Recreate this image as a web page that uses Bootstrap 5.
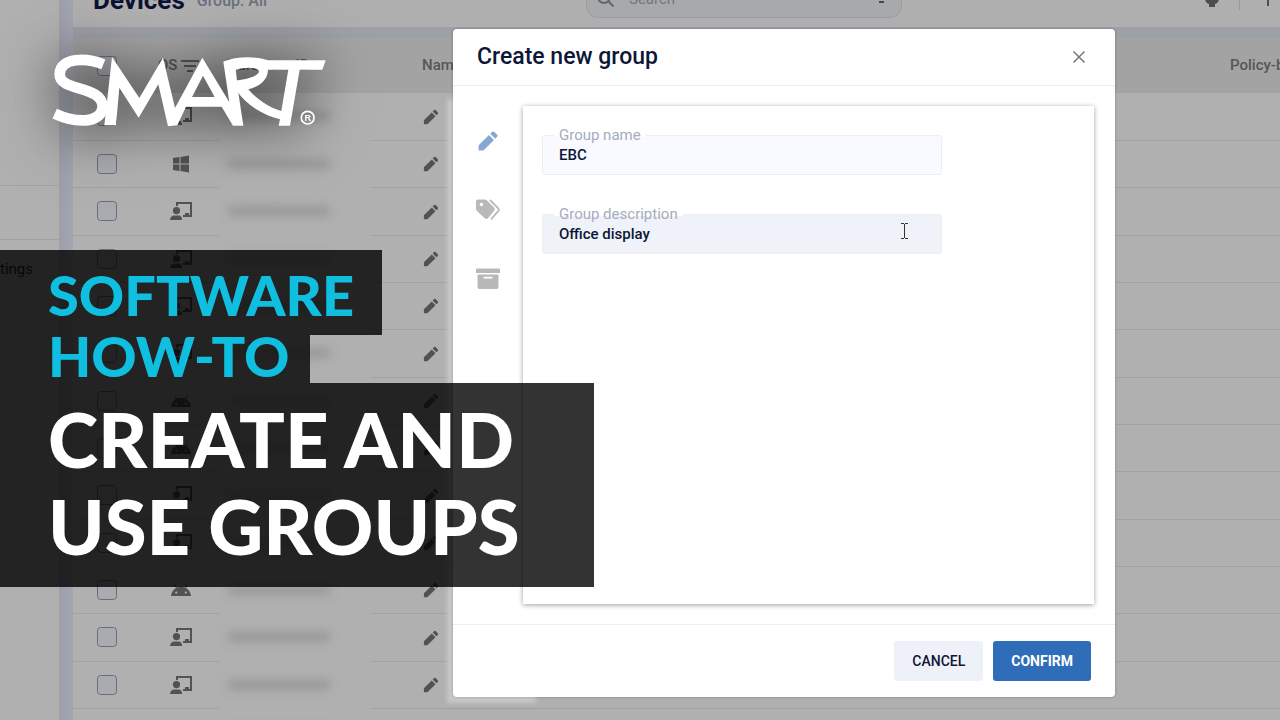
<!DOCTYPE html>
<html lang="en">
<head>
<meta charset="utf-8">
<meta name="viewport" content="width=device-width, initial-scale=1">
<title>Create new group</title>
<link href="https://cdn.jsdelivr.net/npm/bootstrap@5.3.0/dist/css/bootstrap.min.css" rel="stylesheet">
<style>
  body { font-family: Roboto, "Liberation Sans", sans-serif; background: #b0b0b0; color: #55565a; font-size: 15px; }
  .app-shell { min-height: 100vh; }
  .side-menu { width: 59px; border-right: 0; overflow: hidden; color: #15171f; }
  .side-block { border-bottom: 1px solid #a0a1a5; }
  .side-top { height: 186px; }
  .side-mid { height: 54px; }
  .side-link { color: #26272c; height: 58px; direction: rtl; width: 33px; text-decoration: none; }
  .side-gap { width: 14px; background: linear-gradient(90deg, #9c9faa, #a3a6b0); }
  .page-main { min-width: 0; }
  .top-bar { height: 27px; padding: 0 0 0 20px; overflow: hidden; background: #afafaf; }
  .top-bar h1 { font-size: 26px; line-height: 24px; height: 12px; margin-top: -12px; color: #0d1233; font-weight: 700; }
  .top-sub { font-size: 16px; line-height: 20px; margin-top: -9px; color: #6c6f7e; font-weight: 500; }
  .search-box { width: 316px; height: 38px; margin-top: -20px; background: #a8a9ac; border: 1px solid #9c9da2; border-radius: 12px; }
  .search-box input { font-size: 15px; color: #74767e; background: none; border: 0; padding: 0; width: 220px; }
  .search-box input::placeholder { color: #74767e; }
  .band { height: 11px; background: #9d9fa9; }
  .device-table { --bs-table-bg: transparent; --bs-table-color: #55565a; table-layout: fixed; width: 100%; border-color: #a0a1a6; }
  .device-table th { height: 55px; padding: 0; font-weight: 500; background: #a3a3a3; border: 0; vertical-align: middle; white-space: nowrap; overflow: hidden; }
  .device-table td { height: 47px; padding: 0; vertical-align: middle; border-bottom: 1px solid #a1a2a7; white-space: nowrap; overflow: hidden; }
  .device-table tr:nth-child(3n) td { height: 48px; }
  .device-table td.serial { border-bottom-color: transparent; }
  .col-pick { width: 69px; } .col-os { width: 77px; } .col-serial { width: 151px; } .col-policy { width: 50px; }
  .pick { display: block; width: 20px; height: 20px; margin: 0 0 0 24px; background-color: #a9abb1; border: 1px solid #6b6d7c; border-radius: 3px; }
  .masked { display: block; width: 104px; height: 10px; margin-left: 8px; background: #97989b; filter: blur(5px); border-radius: 5px; }
  .name-cell { padding-left: 52px !important; }
  .tool-ic { width: 18px; height: 18px; fill: #525252; }
  .os-ic { width: 24px; height: 24px; fill: #525252; }

  .dialog-layer { position: fixed; inset: 0; padding: 29px 165px 23px 453px; }
  .dialog-box { position: relative; flex: 1; background: #fff; border-radius: 4px; color: #0d1637; box-shadow: 0 0 3px rgba(0,0,0,.25); }
  .dialog-glow { position: absolute; z-index: -1; top: 70px; left: -6px; width: 89px; bottom: -6px; background: #c8c8c8; filter: blur(2px); }
  .dialog-head { height: 57px; padding: 0 24px; border-bottom: 1px solid #ececee; }
  .dialog-head h2 { font-size: 23px; line-height: 28px; font-weight: 500; color: #0d1637; }
  .btn-x { padding: 0; border: 0; background: none; width: 24px; height: 24px; line-height: 0; }
  .tab-rail { width: 70px; padding-top: 43px; gap: 45px; }
  .tab-rail button { border: 0; background: none; padding: 0; width: 24px; height: 24px; line-height: 0; }
  .form-panel { padding: 29px 19px; margin: 20px 21px 20px 0; background: #fff; box-shadow: 0 1px 5px rgba(0,0,0,.38); }
  .field { position: relative; width: 400px; max-width: 100%; margin-bottom: 39px; }
  .field input { width: 100%; height: 40px; padding: 0 16px; border: 1px solid #eceef3; border-radius: 3px; background: #f8faff; color: #0d1637; font-size: 15px; font-weight: 500; }
  .field input.hot { background: #eff2f8; }
  .field label { position: absolute; left: 12px; top: -10px; padding: 0 5px; font-size: 15px; line-height: 20px; color: #a3adbd; background: linear-gradient(#fff 60%, transparent 60%); }
  .beam { position: absolute; left: 358px; top: 8px; }
  .dialog-foot { height: 73px; padding: 0 24px; border-top: 1px solid #ececee; gap: 10px; }
  .btn-act { height: 40px; padding: 0 18px; font-size: 14px; font-weight: 500; border: 0; border-radius: 3px; }
  .btn-soft { background: #eff1f8; color: #0d1637; }
  .btn-main { background: #2f6db9; color: #fff; font-weight: 700; }

  .brand { position: fixed; left: 52px; top: 53px; filter: drop-shadow(0 4px 26px rgba(0,0,0,.6)) drop-shadow(0 6px 28px rgba(0,0,0,.3)); }
  .title-card { position: fixed; left: 0; top: 250px; font-family: Lato, "Liberation Sans", sans-serif; font-weight: 900; color: #fff; }
  .title-card span { display: block; background: rgba(0,0,0,.8); width: max-content; padding-left: 48px; white-space: nowrap; }
  .kick { font-size: 56px; color: #10bfdf; }
  .kick-a { height: 85px; line-height: 90px; padding-right: 28px; }
  .kick-b { height: 48px; line-height: 42px; padding-right: 20px; }
  .head-line { font-size: 76px; height: 204px; line-height: 87px; padding: 12px 74px 0 0; }
</style>
</head>
<body class="overflow-hidden">
<svg width="0" height="0" class="position-absolute" aria-hidden="true">
  <symbol id="pencil" viewBox="0 0 24 24"><path d="M2.500 17.500q0-1 .7-1.700L13 6l5 5-9.800 9.800q-.7.700-1.700.7h-3q-1 0-1-1zM21 8c.7-.7.700-1.700 0-2.400L18.400 3c-.7-.7-1.700-.7-2.400 0l-1.800 1.800 5 5z"/></symbol>
  <symbol id="board" viewBox="0 0 24 24"><path d="M7 3h16v15h-9v-2h2v-2h4v2h1V5H9v2H7zM7.500 8a3.600 3.600 0 1 1 0 7.200 3.600 3.600 0 0 1 0-7.200zM1 21c0-3 2-4.500 4.500-4.500h4C12 16.500 13 18 13 21z"/></symbol>
  <symbol id="windows" viewBox="0 0 24 24"><path d="M4 6l6.500-1v6.500H4zM11.500 4.900L20 3.600v7.900h-8.500zM4 12.500h6.500V19L4 18zM11.500 12.500H20v7.900l-8.500-1.300z"/></symbol>
  <symbol id="android" viewBox="0 0 24 24"><path fill-rule="evenodd" d="M2 18c.3-3.500 2.200-6.400 5-8L5.300 7.100l.8-.5L7.900 9.600a11 11 0 0 1 8.200 0l1.800-3 .8.500L17 10c2.800 1.600 4.700 4.500 5 8zM7.200 13.500a1.100 1.100 0 1 0 0 2.200 1.100 1.100 0 0 0 0-2.200zM16.800 13.500a1.100 1.100 0 1 0 0 2.200 1.100 1.100 0 0 0 0-2.200z"/></symbol>
</svg>

<div class="app-shell d-flex">
  <nav class="side-menu flex-shrink-0">
    <div class="side-block side-top"></div>
    <div class="side-block side-mid"></div>
    <a href="#" class="side-link d-flex align-items-center">Settings</a>
  </nav>
  <div class="side-gap flex-shrink-0"></div>
  <main class="page-main flex-grow-1">
    <header class="top-bar d-flex align-items-start">
      <h1 class="mb-0">Devices</h1>
      <span class="top-sub ms-2 ps-1">Group: All</span>
      <div class="search-box d-flex align-items-center px-2 ms-auto">
        <svg width="22" height="22" viewBox="0 0 22 22" fill="none" stroke="#64666c" stroke-width="2"><circle cx="9" cy="9" r="6"/><path d="M13.500 13.500l5 5"/></svg>
        <input class="ms-2 ps-1" type="text" placeholder="Search" aria-label="Search">
        <svg class="ms-auto me-2" width="6" height="10" viewBox="0 0 6 10"><path fill="#44464c" d="M0 7h5v2H0z"/></svg>
      </div>
      <svg width="378" height="27" viewBox="0 0 378 27" fill="#4c4d50"><path d="M303 0h14q-1 3-4 4v3h-6v-3q-3-1-4-4z"/><path d="M337 0h1v10h-1z" fill="#989898"/><path d="M365 0h2v6h-2z"/></svg>
    </header>
    <div class="band"></div>
    <table class="device-table table mb-0">
      <colgroup><col class="col-pick"><col class="col-os"><col class="col-serial"><col><col class="col-policy"></colgroup>
      <thead><tr>
        <th><input type="checkbox" class="pick form-check-input" aria-label="Select all"></th>
        <th><span class="ps-3">OS</span> <svg width="18" height="14" viewBox="0 0 18 14" stroke="#55565a" stroke-width="2"><path d="M0 2h18M3 7h12M6 12h6"/></svg></th>
        <th><span class="ps-2">Hardware ID</span></th>
        <th class="name-cell">Name</th>
        <th>Policy-based</th>
      </tr></thead>
      <tbody id="rows"></tbody>
    </table>
  </main>
</div>

<div class="dialog-layer d-flex">
  <section class="dialog-box d-flex flex-column" role="dialog" aria-labelledby="dlg-title">
    <div class="dialog-glow"></div>
    <div class="bg-white rounded flex-grow-1 d-flex flex-column">
      <div class="dialog-head d-flex align-items-center justify-content-between">
        <h2 class="mb-0" id="dlg-title">Create new group</h2>
        <button class="btn-x" type="button" aria-label="Close"><svg width="24" height="24" viewBox="0 0 24 24" stroke="#77787c" stroke-width="1.500"><path d="M6.500 6.500l11 11M17.500 6.500l-11 11"/></svg></button>
      </div>
      <div class="d-flex flex-grow-1">
        <div class="tab-rail d-flex flex-column align-items-center flex-shrink-0">
          <button type="button" aria-label="Details"><svg width="24" height="24" fill="#86a7d2"><use href="#pencil"/></svg></button>
          <button type="button" aria-label="Tags"><svg width="24" height="24" viewBox="0 0 24 24"><path fill="#b9b9b9" fill-rule="evenodd" d="M0 3.500Q0 1.500 2 1.500h7q1 0 2 1l7 7q1.800 1.800 0 3.600l-6 7.200q-1.500 1.500-3.300 0L1 13Q0 12 0 11zM5.400 4.700a1.800 1.800 0 1 0 0 3.600 1.800 1.800 0 0 0 0-3.600z"/><path fill="none" stroke="#b9b9b9" stroke-width="1.800" d="M14 2l8 8q1.500 1.700 0 3.400l-7 8"/></svg></button>
          <button type="button" aria-label="Archive"><svg width="24" height="24" viewBox="0 0 24 24" fill="#b9b9b9" fill-rule="evenodd"><path d="M0 2.500Q0 1.500 1 1.500h22q1 0 1 1V6H0z"/><path d="M1.500 7.500h21V20q0 2-2 2h-17q-2 0-2-2zM7.500 9.700v1.800h9V9.700z"/></svg></button>
        </div>
        <form class="form-panel flex-grow-1">
          <div class="field">
            <input id="g-name" type="text" value="EBC">
            <label for="g-name">Group name</label>
          </div>
          <div class="field">
            <input id="g-desc" class="hot" type="text" value="Office display">
            <label for="g-desc">Group description</label>
            <svg class="beam" width="9" height="18" viewBox="0 0 9 18" fill="none" stroke="#333"><path d="M1 1.500h3M5 1.500h3M4.500 2v14M1 16.500h3M5 16.500h3"/></svg>
          </div>
        </form>
      </div>
      <div class="dialog-foot d-flex align-items-center justify-content-end">
        <button class="btn btn-act btn-soft" type="button">CANCEL</button>
        <button class="btn btn-act btn-main" type="button">CONFIRM</button>
      </div>
    </div>
  </section>
</div>

<svg class="brand" width="275" height="75" viewBox="36 40 825 225" role="img" aria-label="SMART">
  <path fill="none" stroke="#fff" stroke-width="32" d="M190 74C140 54 60 52 59 104C58 156 188 136 188 202C184 254 104 250 44 222"/>
  <path fill="#fff" d="M216 52L298 175L369 54L405 205L487 54L568 188L550 66L584 62L595 159L610 258H579L545 201H438L412 257L384 260L355 134L296 234L238 144L228 257H193zM489 108L456 172H524z" fill-rule="evenodd"/>
  <path fill="#fff" fill-rule="evenodd" d="M550 66C590 48 650 50 684 62H857L847 90H779L750 258H716L720 239C670 226 620 196 592 156L584 90zM684 90C684 122 655 142 625 149C650 180 690 205 724 214L745 90zM583 92C610 82 648 82 656 92C664 106 620 121 588 122z"/>
  <circle cx="803" cy="234" r="19" fill="none" stroke="#fff" stroke-width="5"/>
  <text x="803" y="244" text-anchor="middle" font-family="Liberation Sans, sans-serif" font-weight="700" font-size="27" fill="#fff">R</text>
</svg>

<div class="title-card">
  <span class="kick kick-a">SOFTWARE</span>
  <span class="kick kick-b">HOW-TO</span>
  <span class="head-line ps-5">CREATE AND<br>USE GROUPS</span>
</div>

<script>
  const devices = [["board","2"],["windows","S"],["board","8"],["board","2"],["board","Y"],["board","-"],["android","2"],["android","2"],["board","S"],["board","2"],["android","2"],["board","2"],["board","2"],["board","2"]];
  document.getElementById("rows").innerHTML = devices.map(([os, name], i) => `<tr>
    <td><input type="checkbox" class="pick form-check-input" aria-label="Select device ${i + 1}"></td>
    <td class="text-center"><svg class="os-ic"><use href="#${os}"/></svg></td>
    <td class="serial"><span class="masked"></span></td>
    <td class="name-cell"><svg class="tool-ic me-2"><use href="#pencil"/></svg><span class="ms-1">${name}</span></td>
    <td></td></tr>`).join("");
</script>
<script src="https://cdn.jsdelivr.net/npm/bootstrap@5.3.0/dist/js/bootstrap.bundle.min.js"></script>
</body>
</html>
